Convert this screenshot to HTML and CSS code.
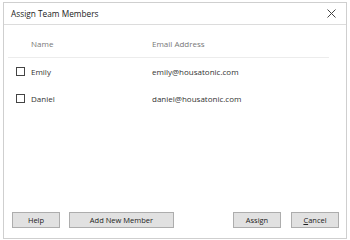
FILE: index.html
```html
<!DOCTYPE html>
<html>
<head>
<meta charset="utf-8">
<link rel="stylesheet" href="styles.css">
</head>
<body>
<div class="window">
  <div class="titlebar">
    <span class="title">Assign Team Members</span>
    <svg class="close" width="9" height="9" viewBox="0 0 9 9"><path d="M0.5 0.5 L8.5 8.5 M8.5 0.5 L0.5 8.5" stroke="#444" stroke-width="1" fill="none"/></svg>
  </div>
  <div class="content">
    <div class="list">
      <div class="row head">
        <span class="cell-check"></span>
        <span class="cell-name">Name</span>
        <span class="cell-email">Email Address</span>
      </div>
      <div class="row">
        <span class="cell-check"><span class="box"></span></span>
        <span class="cell-name">Emily</span>
        <span class="cell-email">emily@housatonic.com</span>
      </div>
      <div class="row">
        <span class="cell-check"><span class="box"></span></span>
        <span class="cell-name">Daniel</span>
        <span class="cell-email">daniel@housatonic.com</span>
      </div>
    </div>
    <div class="footer">
      <button class="btn btn-help">Help</button>
      <button class="btn btn-add">Add New Member</button>
      <span class="spacer"></span>
      <button class="btn btn-assign">Assign</button>
      <button class="btn btn-cancel"><u>C</u>ancel</button>
    </div>
  </div>
</div>
</body>
</html>
```
FILE: styles.css
```css
html, body {
  margin: 0;
  padding: 0;
  background: #ffffff;
}
body {
  width: 350px;
  height: 240px;
  overflow: hidden;
  font-family: "Open Sans", "Noto Sans", sans-serif;
  color: #333;
}
.window {
  box-sizing: border-box;
  margin: 2px 0 0 3px;
  width: 344px;
  height: 237px;
  border: 1px solid #cfcfcf;
  display: flex;
  flex-direction: column;
  background: #fff;
}
.titlebar {
  height: 21px;
  border-bottom: 1px solid #dcdcdc;
  display: flex;
  align-items: center;
  padding: 0 10px 0 7px;
}
.title {
  font-size: 8.3px;
  color: #222;
  flex: 1;
}
.close {
  display: block;
}
.content {
  flex: 1;
  display: flex;
  flex-direction: column;
}
.list {
  margin: 0 17px 0 4px;
}
.row {
  display: flex;
  align-items: center;
  height: 27px;
  font-size: 8px;
  color: #333;
}
.row.head {
  height: 33px;
  padding-top: 4px;
  box-sizing: border-box;
  border-bottom: 1px solid #ececec;
  color: #777;
}
.cell-check {
  width: 23px;
  display: flex;
  align-items: center;
  padding-left: 8px;
  box-sizing: border-box;
}
.box {
  width: 9px;
  height: 9px;
  border: 1px solid #444;
  box-sizing: border-box;
  display: block;
}
.cell-name {
  width: 121px;
}
.cell-email {
  flex: 1;
}
.footer {
  margin-top: auto;
  display: flex;
  align-items: center;
  padding: 0 7px 10px 8px;
}
.spacer {
  flex: 1;
}
.btn {
  height: 16px;
  box-sizing: border-box;
  border: 1px solid #adadad;
  background: #e1e1e1;
  font-family: "Open Sans", "Noto Sans", sans-serif;
  font-size: 7.5px;
  color: #222;
  padding: 0;
  margin: 0;
}
.btn u {
  text-decoration: underline;
}
.btn-help { width: 48px; }
.btn-add { width: 105px; margin-left: 9px; }
.btn-assign { width: 48px; }
.btn-cancel { width: 48px; margin-left: 10px; }
```
